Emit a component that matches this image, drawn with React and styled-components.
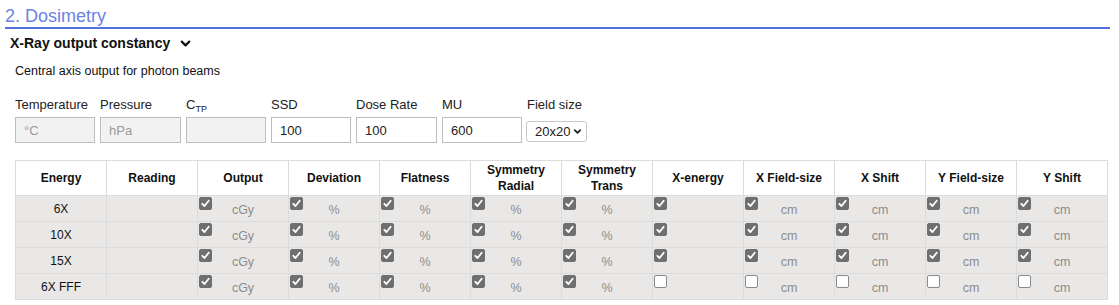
import styled, { createGlobalStyle } from "styled-components";
import { ChevronDown } from "lucide-react";

const GlobalStyle = createGlobalStyle`
body{
    margin:0;
    background:white;
    font-family:"Liberation Sans", Arial, sans-serif;
    color:#111;
}
`

const Page = styled.div`
padding:0 9px 0 5px;
`

const SectionHeading = styled.h2`
margin:0;
padding-top:5px;
font-size:18px;
line-height:22px;
font-weight:400;
color:#6c82e4;
border-bottom:2px solid #4f72dc;
`

const Panel = styled.div`
padding:0 0 0 5px;
`

const PanelTitle = styled.div`
margin-top:4px;
display:flex;
align-items:center;
gap:8px;
font-size:14px;
line-height:20px;
font-weight:700;
color:#111;
`

const Description = styled.p`
margin:10px 0 0 5px;
font-size:12.5px;
line-height:16px;
`

const FieldsRow = styled.div`
margin:18px 0 0 5px;
display:flex;
gap:5px;
align-items:flex-start;
`

const Field = styled.label`
display:flex;
flex-direction:column;
gap:5px;
font-size:13px;
line-height:15px;
color:#222;
`

const LabelText = styled.span`
height:15px;
`

const Sub = styled.sub`
font-size:9px;
line-height:0;
vertical-align:-3px;
`

const TextInput = styled.input`
box-sizing:border-box;
width:${({$width})=>$width || 80}px;
height:26px;
padding:0 8px;
border:1px solid #bdbdbd;
border-radius:0;
background:${({disabled})=>disabled ? "#f2f2f2" : "white"};
font-family:inherit;
font-size:13px;
color:#222;
outline:none;
&::placeholder{
    color:#9a9a9a;
}
`

const SelectWrap = styled.div`
position:relative;
width:61px;
height:21px;
margin-top:4px;
margin-left:-1px;
`

const Select = styled.select`
appearance:none;
box-sizing:border-box;
width:100%;
height:100%;
padding:0 0 0 8px;
border:1px solid #c8c8c8;
border-radius:3px;
background:white;
font-family:inherit;
font-size:13px;
color:#222;
`

const SelectIcon = styled(ChevronDown)`
position:absolute;
right:4px;
top:5px;
pointer-events:none;
`

const Table = styled.table`
margin:17px 0 0 5px;
width:1093px;
border-collapse:collapse;
table-layout:fixed;
font-size:12px;
`

const HeaderCell = styled.th`
height:34px;
padding:0 4px;
border:1px solid #dcdcdc;
background:white;
font-weight:700;
line-height:16px;
color:#111;
text-align:center;
`

const Row = styled.tr`
background:#e9e8e6;
`

const Cell = styled.td`
position:relative;
height:25px;
padding:0;
border:1px solid #dcdcdc;
line-height:14px;
text-align:center;
color:${({$muted})=>$muted ? "#8c8c8c" : "#111"};
font-size:${({$muted})=>$muted ? "12.5px" : "12px"};
`

const UnitText = styled.span`
position:relative;
top:1px;
`

const Check = styled.span`
position:absolute;
left:1px;
top:1px;
box-sizing:border-box;
width:13px;
height:13px;
border-radius:2px;
display:flex;
align-items:center;
justify-content:center;
background:${({$checked})=>$checked ? "#6f6f6f" : "white"};
border:1px solid ${({$checked})=>$checked ? "#6f6f6f" : "#8a8a8a"};
`

const HEADERS = ["Energy","Reading","Output","Deviation","Flatness",["Symmetry","Radial"],["Symmetry","Trans"],"X-energy","X Field-size","X Shift","Y Field-size","Y Shift"];
const UNITS = ["cGy","%","%","%","%","","cm","cm","cm","cm"];
const ENERGIES = ["6X","10X","15X","6X FFF"];

function CheckMark({checked}){
    return (
        <Check $checked={checked}>
            {checked && (
                <svg width="9" height="9" viewBox="0 0 9 9">
                    <path d="M1.3 4.8 L3.5 7 L7.7 1.8" fill="none" stroke="white" strokeWidth="1.8" strokeLinecap="round" strokeLinejoin="round"/>
                </svg>
            )}
        </Check>
    )
}

function renderRow(energy){
    const full = energy !== "6X FFF";
    return (
        <Row key={energy}>
            <Cell>{energy}</Cell>
            <Cell/>
            {UNITS.map((unit, i)=>(
                <Cell key={i} $muted>
                    <CheckMark checked={i < 5 || full}/>
                    <UnitText>{unit}</UnitText>
                </Cell>
            ))}
        </Row>
    )
}

export default function App(){
    return (
        <>
            <GlobalStyle/>
            <Page>
                <SectionHeading>2. Dosimetry</SectionHeading>
                <Panel>
                    <PanelTitle>
                        X-Ray output constancy
                        <ChevronDown size={15} strokeWidth={3.5} color="#111"/>
                    </PanelTitle>
                    <Description>Central axis output for photon beams</Description>
                    <FieldsRow>
                        <Field><LabelText>Temperature</LabelText><TextInput disabled placeholder="°C"/></Field>
                        <Field><LabelText>Pressure</LabelText><TextInput disabled placeholder="hPa" $width={81}/></Field>
                        <Field><LabelText>C<Sub>TP</Sub></LabelText><TextInput disabled/></Field>
                        <Field><LabelText>SSD</LabelText><TextInput defaultValue="100"/></Field>
                        <Field><LabelText>Dose Rate</LabelText><TextInput defaultValue="100" $width={81}/></Field>
                        <Field><LabelText>MU</LabelText><TextInput defaultValue="600"/></Field>
                        <Field>
                            <LabelText>Field size</LabelText>
                            <SelectWrap>
                                <Select defaultValue="20x20">
                                    <option>10x10</option>
                                    <option>20x20</option>
                                    <option>30x30</option>
                                </Select>
                                <SelectIcon size={11} strokeWidth={4} color="#222"/>
                            </SelectWrap>
                        </Field>
                    </FieldsRow>
                    <Table>
                        <thead>
                            <tr>
                                {HEADERS.map((h, i)=>(
                                    <HeaderCell key={i}>
                                        {Array.isArray(h) ? <>{h[0]}<br/>{h[1]}</> : h}
                                    </HeaderCell>
                                ))}
                            </tr>
                        </thead>
                        <tbody>
                            {ENERGIES.map(renderRow)}
                        </tbody>
                    </Table>
                </Panel>
            </Page>
        </>
    )
}
